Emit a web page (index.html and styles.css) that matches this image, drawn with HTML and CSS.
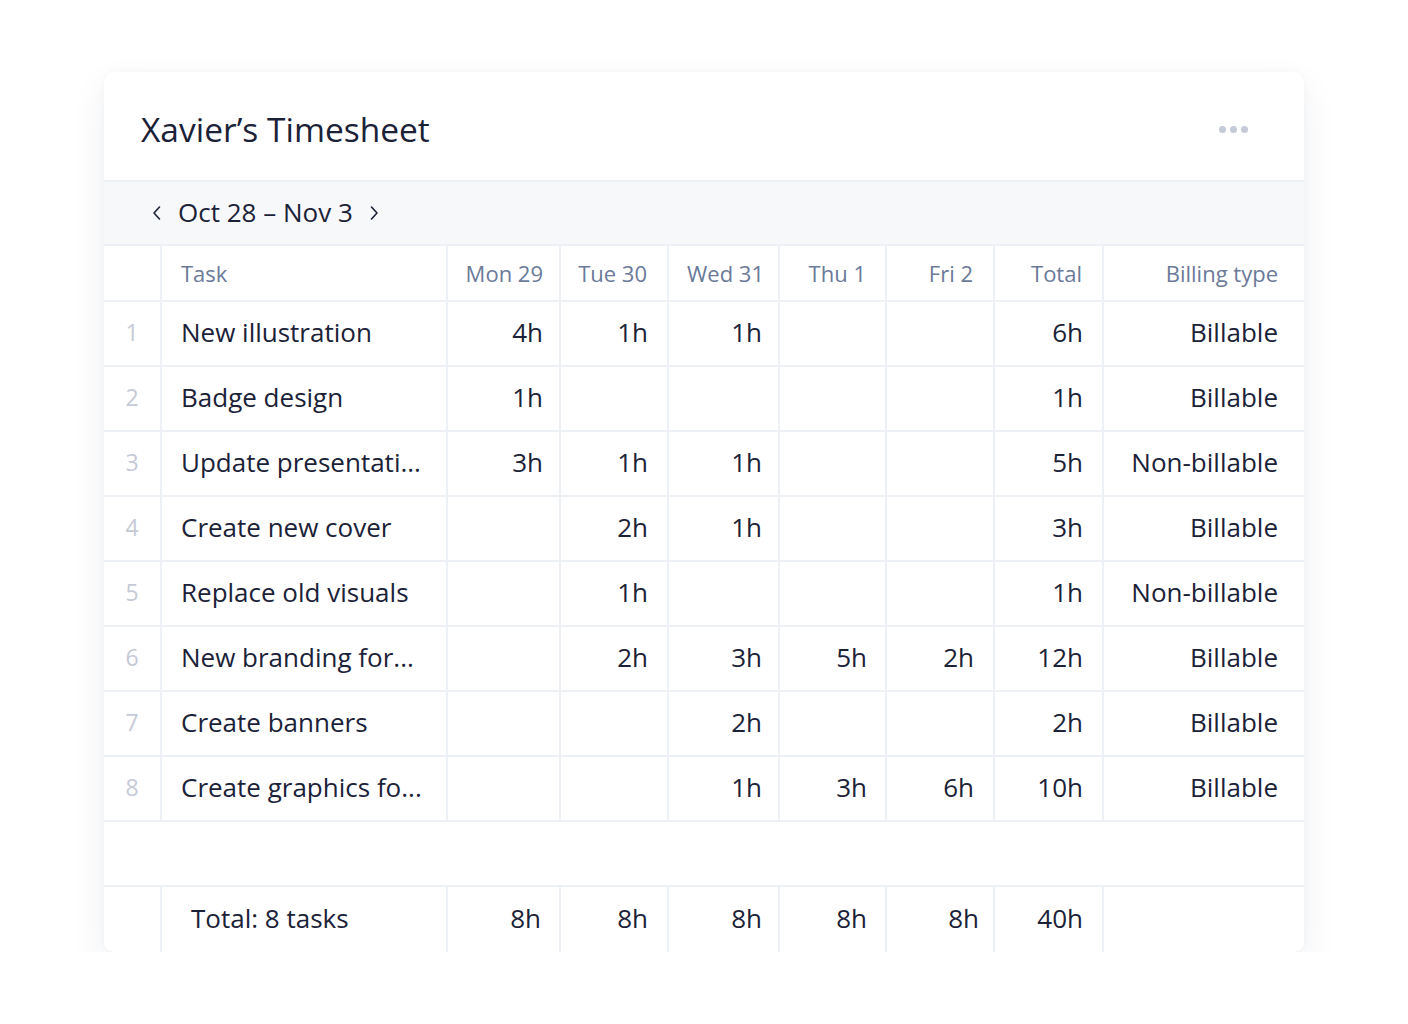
FILE: index.html
```html
<!DOCTYPE html>
<html>
<head>
<meta charset="utf-8">
<link rel="stylesheet" href="styles.css">
</head>
<body>
<div class="page">
  <div class="card">
    <div class="card-head">
      <h1 class="title">Xavier’s Timesheet</h1>
      <div class="more"><span></span><span></span><span></span></div>
    </div>
    <div class="datebar">
      <svg class="arrow" width="10" height="16" viewBox="0 0 10 16"><path d="M7.5 2 L2 8 L7.5 14" fill="none" stroke="#1b2238" stroke-width="1.6" stroke-linecap="round" stroke-linejoin="round"/></svg>
      <span class="range">Oct 28 – Nov 3</span>
      <svg class="arrow" width="10" height="16" viewBox="0 0 10 16"><path d="M2.5 2 L8 8 L2.5 14" fill="none" stroke="#1b2238" stroke-width="1.6" stroke-linecap="round" stroke-linejoin="round"/></svg>
    </div>
    <table class="sheet">
      <colgroup>
        <col class="c-num"><col class="c-task"><col class="c-mon"><col class="c-tue"><col class="c-wed"><col class="c-thu"><col class="c-fri"><col class="c-total"><col class="c-bill">
      </colgroup>
      <thead>
        <tr>
          <th class="num"></th>
          <th class="task">Task</th>
          <th class="mon">Mon 29</th>
          <th class="tue">Tue 30</th>
          <th class="wed">Wed 31</th>
          <th class="thu">Thu 1</th>
          <th class="fri">Fri 2</th>
          <th class="tot">Total</th>
          <th class="bill">Billing type</th>
        </tr>
      </thead>
      <tbody>
        <tr><td class="num">1</td><td class="task">New illustration</td><td class="mon">4h</td><td class="tue">1h</td><td class="wed">1h</td><td class="thu"></td><td class="fri"></td><td class="tot">6h</td><td class="bill">Billable</td></tr>
        <tr><td class="num">2</td><td class="task">Badge design</td><td class="mon">1h</td><td class="tue"></td><td class="wed"></td><td class="thu"></td><td class="fri"></td><td class="tot">1h</td><td class="bill">Billable</td></tr>
        <tr><td class="num">3</td><td class="task">Update presentati...</td><td class="mon">3h</td><td class="tue">1h</td><td class="wed">1h</td><td class="thu"></td><td class="fri"></td><td class="tot">5h</td><td class="bill">Non-billable</td></tr>
        <tr><td class="num">4</td><td class="task">Create new cover</td><td class="mon"></td><td class="tue">2h</td><td class="wed">1h</td><td class="thu"></td><td class="fri"></td><td class="tot">3h</td><td class="bill">Billable</td></tr>
        <tr><td class="num">5</td><td class="task">Replace old visuals</td><td class="mon"></td><td class="tue">1h</td><td class="wed"></td><td class="thu"></td><td class="fri"></td><td class="tot">1h</td><td class="bill">Non-billable</td></tr>
        <tr><td class="num">6</td><td class="task">New branding for...</td><td class="mon"></td><td class="tue">2h</td><td class="wed">3h</td><td class="thu">5h</td><td class="fri">2h</td><td class="tot">12h</td><td class="bill">Billable</td></tr>
        <tr><td class="num">7</td><td class="task">Create banners</td><td class="mon"></td><td class="tue"></td><td class="wed">2h</td><td class="thu"></td><td class="fri"></td><td class="tot">2h</td><td class="bill">Billable</td></tr>
        <tr><td class="num">8</td><td class="task">Create graphics fo...</td><td class="mon"></td><td class="tue"></td><td class="wed">1h</td><td class="thu">3h</td><td class="fri">6h</td><td class="tot">10h</td><td class="bill">Billable</td></tr>
        <tr class="empty"><td colspan="9"></td></tr>
      </tbody>
      <tfoot>
        <tr><td class="num"></td><td class="task foot-task">Total: 8 tasks</td><td class="mon">8h</td><td class="tue">8h</td><td class="wed">8h</td><td class="thu">8h</td><td class="fri">8h</td><td class="tot">40h</td><td class="bill"></td></tr>
      </tfoot>
    </table>
  </div>
</div>
</body>
</html>
```
FILE: styles.css
```css
html, body {
  margin: 0;
  padding: 0;
  background: #ffffff;
}
body {
  font-family: "Open Sans", "Noto Sans", sans-serif;
  color: #1b2238;
}
.page {
  padding: 72px 104px 0 104px;
}
.card {
  width: 1200px;
  background: #ffffff;
  border-radius: 10px;
  box-shadow: 0 14px 36px rgba(30, 45, 80, 0.07), 0 0 10px rgba(30, 45, 80, 0.03);
  overflow: hidden;
}
.card-head {
  height: 110px;
  display: flex;
  align-items: center;
  justify-content: space-between;
  padding: 0 56px 0 37px;
  border-bottom: 2px solid #edf0f5;
  box-sizing: border-box;
}
.title {
  margin: 0;
  font-size: 33.5px;
  font-weight: 400;
  color: #1b2238;
  position: relative;
  top: 3px;
}
.more {
  display: flex;
  gap: 4px;
  margin-top: 6px;
}
.more span {
  width: 7px;
  height: 7px;
  border-radius: 50%;
  background: #c4cad8;
}
.datebar {
  height: 64px;
  background: #f7f8fa;
  display: flex;
  align-items: center;
  padding-left: 48px;
  box-sizing: border-box;
  border-bottom: 2px solid #edf0f5;
}
.range {
  font-size: 26px;
  color: #1b2238;
  margin: 0 16px 0 16px;
  position: relative;
  top: -1px;
}
.arrow {
  display: block;
}
.sheet {
  width: 1200px;
  border-collapse: separate;
  border-spacing: 0;
  table-layout: fixed;
}
.c-num { width: 58px; }
.c-task { width: 286px; }
.c-mon { width: 113px; }
.c-tue { width: 108px; }
.c-wed { width: 111px; }
.c-thu { width: 107px; }
.c-fri { width: 108px; }
.c-total { width: 109px; }
.c-bill { width: 200px; }
.sheet tr { height: 65px; }
.sheet thead tr { height: 56px; }
.sheet th, .sheet td {
  border: 0 solid #edf0f5;
  border-right-width: 2px;
  border-bottom-width: 2px;
  text-align: right;
  padding: 0 19px 0 0;
  white-space: nowrap;
  overflow: hidden;
  vertical-align: middle;
}
.sheet tr > :last-child { border-right-width: 0; }
.sheet tr.empty td { border-right-width: 0; }
.sheet thead th {
  font-weight: 400;
  font-size: 22px;
  color: #6b7a99;
  padding-top: 0;
}
.sheet thead .mon { padding-right: 16px; }
.sheet thead .tue { padding-right: 20px; }
.sheet thead .wed { padding-right: 14px; }
.sheet thead .fri { padding-right: 20px; }
.sheet thead .tot { padding-right: 20px; }
.sheet tbody td, .sheet tfoot td {
  font-size: 26px;
  color: #1b2238;
  padding-bottom: 3px;
}
.sheet tbody .mon { padding-right: 16px; }
.sheet tbody .wed { padding-right: 16px; }
.sheet tbody .thu { padding-right: 18px; }
.sheet .num {
  text-align: center;
  padding: 0 0 3px 0;
  color: #c5cad6;
  font-size: 23px;
}
.sheet .task {
  text-align: left;
  padding-left: 19px;
  padding-right: 0;
}
.sheet .bill {
  padding-right: 26px;
}
.sheet tfoot td {
  border-bottom-width: 0;
}
.sheet .foot-task {
  padding-left: 29px;
}
.sheet tfoot .mon { padding-right: 18px; }
.sheet tfoot .wed { padding-right: 16px; }
.sheet tfoot .thu { padding-right: 18px; }
.sheet tfoot .fri { padding-right: 14px; }
```
